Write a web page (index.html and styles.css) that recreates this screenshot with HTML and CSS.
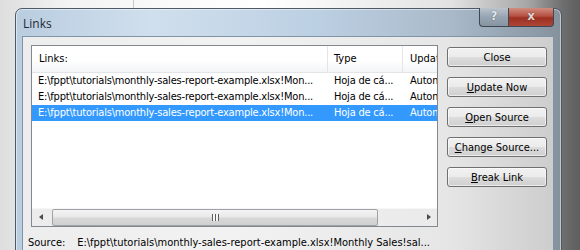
FILE: index.html
```html
<!DOCTYPE html>
<html lang="en">
<head>
    <meta charset="UTF-8">
    <title>Links</title>
    <link rel="stylesheet" href="styles.css">
</head>
<body>
<div class="desk">
    <div class="window">
        <div class="titlebar">
            <div class="title">Links</div>
            <div class="caption-btns">
                <div class="cap help">?</div>
                <div class="cap close">x</div>
            </div>
        </div>

        <div class="client">
            <div class="main-row">
                <div class="listview">
                    <div class="lv-header">
                        <div class="col c1">Links:</div>
                        <div class="col c2">Type</div>
                        <div class="col c3">Update</div>
                    </div>
                    <div class="lv-row">
                        <div class="col c1">E:\fppt\tutorials\monthly-sales-report-example.xlsx!Mon...</div>
                        <div class="col c2">Hoja de cá...</div>
                        <div class="col c3">Automatic</div>
                    </div>
                    <div class="lv-row">
                        <div class="col c1">E:\fppt\tutorials\monthly-sales-report-example.xlsx!Mon...</div>
                        <div class="col c2">Hoja de cá...</div>
                        <div class="col c3">Automatic</div>
                    </div>
                    <div class="lv-row selected">
                        <div class="col c1">E:\fppt\tutorials\monthly-sales-report-example.xlsx!Mon...</div>
                        <div class="col c2">Hoja de cá...</div>
                        <div class="col c3">Automatic</div>
                    </div>
                    <div class="lv-empty"></div>
                    <div class="hscroll">
                        <div class="arrow left"></div>
                        <div class="track">
                            <div class="thumb"><span class="grip"></span></div>
                        </div>
                        <div class="arrow right"></div>
                    </div>
                </div>

                <div class="buttons">
                    <button class="btn">Close</button>
                    <button class="btn"><u>U</u>pdate Now</button>
                    <button class="btn"><u>O</u>pen Source</button>
                    <button class="btn"><u>C</u>hange Source...</button>
                    <button class="btn"><u>B</u>reak Link</button>
                </div>
            </div>

            <div class="source">
                <span class="source-label">Source:</span>
                <span class="source-path">E:\fppt\tutorials\monthly-sales-report-example.xlsx!Monthly Sales!sal...</span>
            </div>
        </div>
    </div>
</div>
</body>
</html>
```

FILE: styles.css
```css
html, body {
    margin: 0;
    height: 250px;
    overflow: hidden;
}
body {
    font-family: Tahoma, "DejaVu Sans Condensed", "DejaVu Sans", sans-serif;
    font-size: 11px;
    color: #000;
    background:
        linear-gradient(#c8c8c8, #c8c8c8) no-repeat 133px 0 / 1px 8px,
        linear-gradient(90deg, #dedede 0%, #f3f3f3 12%, #ffffff 45%, #e2e2e2 78%, #a6a6a6 91%, #6e6e6e 97%, #5e5e5e 100%);
}
.desk {
    padding: 8px 0 0 15px;
}
.window {
    width: 545px;
    height: 270px;
    border: 1px solid #4d5966;
    border-radius: 7px 7px 0 0;
    background: linear-gradient(90deg, #b9cde0 0%, #d0dfed 25%, #bcd0e3 55%, #a9b9c9 80%, #85919d 100%);
    box-shadow: inset 0 0 0 1px rgba(255, 255, 255, 0.5);
}
.titlebar {
    height: 27px;
    display: flex;
    justify-content: space-between;
    align-items: flex-start;
}
.title {
    font-family: "Open Sans", "Noto Sans", sans-serif;
    font-size: 12px;
    color: #1e2a36;
    padding: 6px 0 0 7px;
}
.caption-btns {
    display: flex;
    margin: -1px 7px 0 0;
}
.cap {
    height: 18px;
    border: 1px solid #3e4852;
    border-top: none;
    font-family: "DejaVu Sans", sans-serif;
    font-weight: bold;
    font-size: 12px;
    text-align: center;
    line-height: 17px;
}
.help {
    width: 28px;
    border-radius: 0 0 0 4px;
    border-right: none;
    background: linear-gradient(#b9c3cd, #97a4b1 50%, #8795a3);
    color: #e3e9ee;
    text-shadow: 0 0 1px #34404c;
}
.close {
    width: 44px;
    border-radius: 0 0 4px 0;
    background: linear-gradient(#cf8e80, #b65042 45%, #9c3022 55%, #ae4637);
    color: #e0d6d4;
    text-shadow: 0 0 1px #3a1a14;
}
.client {
    margin: 0 7px 0 6px;
    height: 260px;
    border: 1px solid #8193a6;
    background: linear-gradient(90deg, #ededed 0%, #f2f2f2 40%, #e6e6e6 80%, #cdcdcd 100%);
    padding: 8px 0 0 5px;
}
.main-row {
    display: flex;
    align-items: flex-start;
    gap: 9px;
    margin-left: 3px;
}
.listview {
    width: 405px;
    height: 180px;
    border: 1px solid #828790;
    background: #fff;
    display: flex;
    flex-direction: column;
    overflow: hidden;
}
.lv-header,
.lv-row {
    display: flex;
    white-space: nowrap;
}
.lv-header {
    height: 26px;
    align-items: center;
    background: linear-gradient(#ffffff 0%, #ffffff 55%, #f3f4f6 100%);
    border-bottom: 1px solid #e2e4e7;
}
.col {
    overflow: hidden;
    flex-shrink: 0;
    box-sizing: border-box;
}
.lv-header .col {
    height: 26px;
    line-height: 26px;
    border-right: 1px solid #e3e5e8;
}
.c1 {
    width: 296px;
    padding-left: 7px;
}
.c2 {
    width: 75px;
    padding-left: 6px;
}
.c3 {
    width: 75px;
    padding-left: 7px;
}
.lv-row {
    height: 16px;
    line-height: 15px;
    letter-spacing: -0.2px;
}
.lv-row .c1 {
    padding-left: 6px;
}
.lv-row.selected {
    background: #3399ff;
    color: #fff;
}
.lv-empty {
    flex: 1;
}
.hscroll {
    height: 17px;
    display: flex;
    background: linear-gradient(90deg, #ececec, #f0f0f0 50%, #eaeaea);
    border-top: 1px solid #f6f6f6;
}
.arrow {
    width: 17px;
    position: relative;
}
.arrow::after {
    content: "";
    position: absolute;
    top: 5px;
    border-top: 3px solid transparent;
    border-bottom: 3px solid transparent;
}
.arrow.left::after {
    left: 7px;
    border-right: 4px solid #4a4a4a;
}
.arrow.right::after {
    left: 7px;
    border-left: 4px solid #4a4a4a;
}
.track {
    flex: 1;
    padding: 0 1px 0 3px;
}
.thumb {
    width: 324px;
    height: 15px;
    border: 1px solid #9ea1a6;
    border-radius: 2px;
    background: linear-gradient(#f4f4f4, #e9e9e9 45%, #d8d8d8 55%, #d0d0d0);
    display: flex;
    justify-content: center;
    align-items: center;
}
.grip {
    width: 7px;
    height: 7px;
    background: repeating-linear-gradient(90deg, #5c5c5c 0 1px, #f6f6f6 1px 3px);
}
.buttons {
    display: flex;
    flex-direction: column;
    gap: 10px;
    margin-top: 2px;
}
.btn {
    width: 100px;
    height: 20px;
    padding: 0;
    border: 1px solid #707070;
    border-radius: 3px;
    background: linear-gradient(#f2f2f2, #ebebeb 49%, #dddddd 51%, #cfcfcf);
    box-shadow: inset 0 0 0 1px rgba(255, 255, 255, 0.6);
    font-family: inherit;
    font-size: 11px;
    color: #000;
}
.source {
    margin-top: 8px;
    height: 16px;
    line-height: 16px;
    white-space: nowrap;
}
.source-label {
    display: inline-block;
    width: 46px;
}
```
